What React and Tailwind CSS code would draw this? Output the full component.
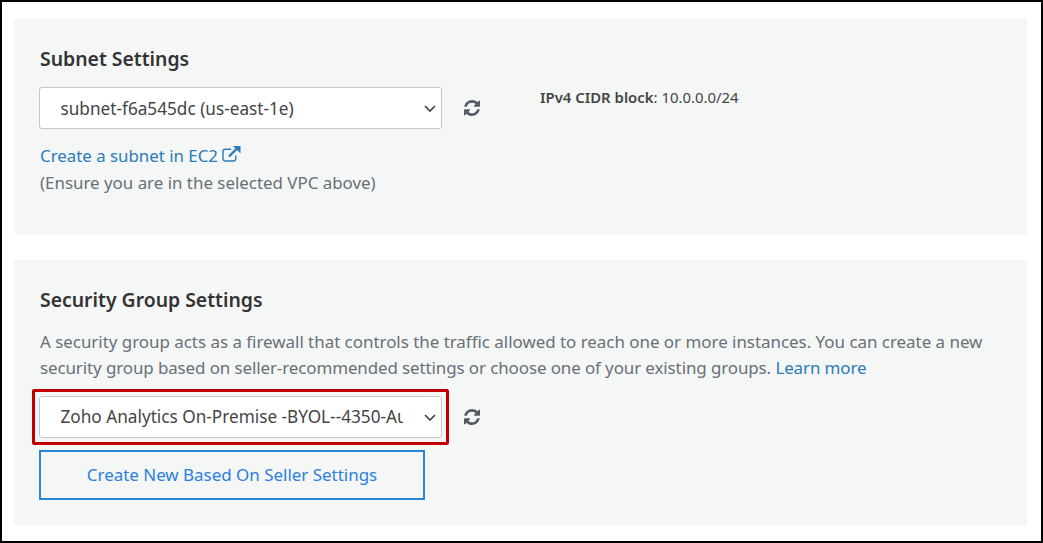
import React from "react";

function ExternalLink() {
  return (
    <svg viewBox="0 0 19 16" className="w-[19px] h-[16px] ml-[4px] mb-[3px] shrink-0" fill="none" stroke="currentColor">
      <path d="M13.8 9.5v3.2a2.3 2.3 0 0 1-2.3 2.3H3.3A2.3 2.3 0 0 1 1 12.7V5.5a2.3 2.3 0 0 1 2.3-2.3H9" strokeWidth="1.4" />
      <path d="M7 10.5 15 2.5" strokeWidth="2.4" />
      <path d="M11 0h7.5v7.5z" fill="currentColor" stroke="none" />
    </svg>
  );
}

function Refresh({ className }) {
  return (
    <svg viewBox="128 128 1536 1536" className={`w-[16px] h-[16px] text-[#545b64] shrink-0 ${className}`} fill="currentColor">
      <path d="M1639 1056q0 5-1 7-64 268-268 434.5t-478 166.5q-146 0-282.5-55t-243.5-157l-129 129q-19 19-45 19t-45-19-19-45v-448q0-26 19-45t45-19h448q26 0 45 19t19 45-19 45l-137 137q71 66 161 102t187 36q134 0 250-65t186-179q11-17 53-117 8-23 30-23h192q13 0 22.5 9.5t9.5 22.5zm25-800v448q0 26-19 45t-45 19h-448q-26 0-45-19t-19-45 19-45l138-138q-148-137-349-137-134 0-250 65t-186 179q-11 17-53 117-8 23-30 23h-199q-13 0-22.5-9.5t-9.5-22.5v-7q65-268 270-434.5t480-166.5q146 0 284 55.5t245 156.5l130-129q19-19 45-19t45 19 19 45z" />
    </svg>
  );
}

function SelectRow({ value, padClass }) {
  return (
    <div className="flex items-center">
      <div className="relative w-[403px] h-[42px]">
        <select
          defaultValue={value}
          className={`appearance-none block w-full h-full pl-[20.5px] pr-[38px] bg-white border border-[#c6c6c6] rounded-[3px] text-[17.2px] text-[#444444] outline-none ${padClass}`}
        >
          <option value={value}>{value}</option>
        </select>
        <svg viewBox="0 0 12 7" className="absolute right-[6px] top-[18px] w-[12px] h-[7px] text-[#444444] pointer-events-none" fill="none" stroke="currentColor" strokeWidth="1.7">
          <path d="M1 1l5 5 5-5" />
        </svg>
      </div>
      <Refresh className="ml-[22px] mb-[1px]" />
    </div>
  );
}

export default function App() {
  return (
    <div className="w-[1043px] h-[543px] box-border border-2 border-black bg-white pt-[17px] pl-[12px] pr-[14px] font-['Noto_Sans',sans-serif] overflow-hidden">
      <section className="h-[215px] bg-[#f5f6f6] pt-[26px] pl-[25px]">
        <h2 className="pl-px text-[19.4px] leading-[28px] font-semibold text-[#333333]">Subnet Settings</h2>
        <div className="flex mt-[14px]">
          <SelectRow value="subnet-f6a545dc (us-east-1e)" padClass="pt-[2px]" />
          <p className="ml-[60px] text-[14.9px] leading-[20px] text-[#444444]">
            <span className="font-semibold">IPv4 CIDR block</span>: 10.0.0.0/24
          </p>
        </div>
        <a className="flex items-center pl-px mt-[13px] text-[16.85px] leading-[27px] text-[#2b7cb8]">
          Create a subnet in EC2
          <ExternalLink />
        </a>
        <p className="pl-px text-[16.9px] leading-[27px] text-[#687078]">(Ensure you are in the selected VPC above)</p>
      </section>

      <section className="h-[265px] mt-[26px] bg-[#f5f6f6] pt-[26px] pl-[25px]">
        <h2 className="pl-px text-[19.4px] leading-[28px] font-semibold text-[#333333]">Security Group Settings</h2>
        <p className="pl-px mt-[15px] w-[975px] text-[16.95px] leading-[26px] text-[#687078]">
          <span className="tracking-[-0.02px]">A security group acts as a firewall that controls the traffic allowed to reach one or more instances. You can create a new</span>
          <br />
          <span className="tracking-[-0.1px]">security group based on seller-recommended settings or choose one of your existing groups.{" "}
          <a className="text-[#2b7cb8]">Learn more</a></span>
        </p>
        <div className="relative mt-[15px]">
          <SelectRow value="Zoho Analytics On-Premise -BYOL--4350-AutogenByAWSMP-" padClass="pt-0" />
          <div className="absolute left-[-7px] top-[-7px] w-[417px] h-[56px] border-[3px] border-[#c00000] rounded-[2px] pointer-events-none" />
        </div>
        <button className="block mt-[12px] w-[386px] h-[50px] border-2 border-[#2a86db] text-[16.95px] text-[#2a7fe0]">
          Create New Based On Seller Settings
        </button>
      </section>
    </div>
  );
}
